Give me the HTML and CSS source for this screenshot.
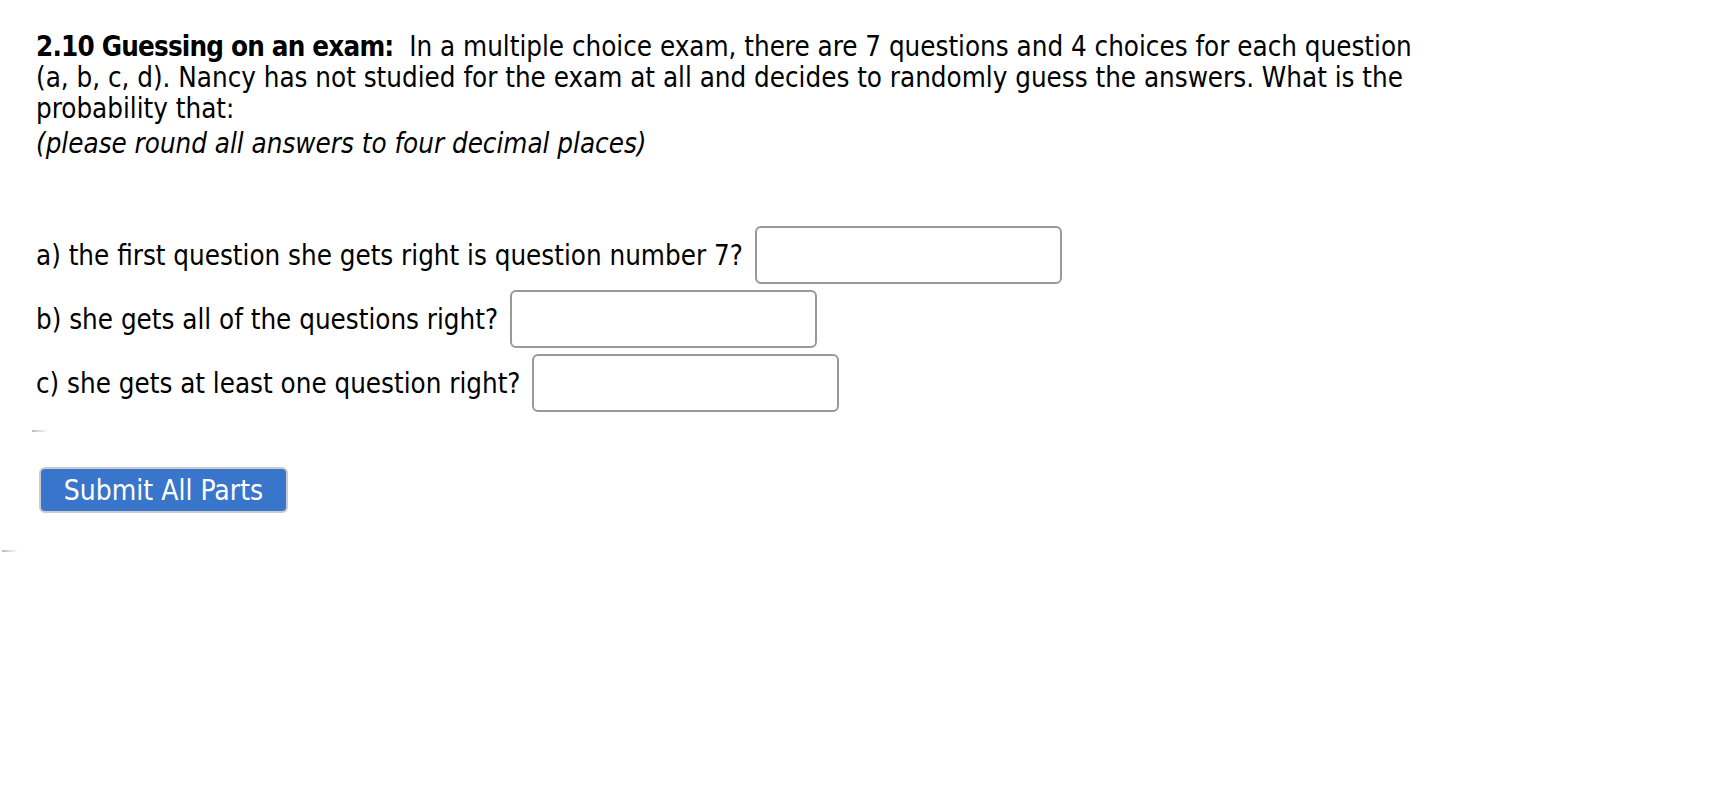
FILE: index.html
```html
<!DOCTYPE html>
<html lang="en">

<head>
    <meta charset="UTF-8">
    <title>2.10 Guessing on an exam</title>
    <link rel="stylesheet" href="styles.css">
</head>

<body>
    <div class="question">
        <p class="prompt">
            <b>2.10 Guessing on an exam:</b>&nbsp; In a multiple choice exam, there are 7 questions and 4 choices for each question (a, b, c, d). Nancy has not studied for the exam at all and decides to randomly guess the answers. What is the probability that:
        </p>
        <p class="note"><i>(please round all answers to four decimal places)</i></p>

        <div class="parts">
            <div class="part">
                <label for="partA">a) the first question she gets right is question number 7?</label>
                <input type="text" id="partA">
            </div>
            <div class="part">
                <label for="partB">b) she gets all of the questions right?</label>
                <input type="text" id="partB">
            </div>
            <div class="part">
                <label for="partC">c) she gets at least one question right?</label>
                <input type="text" id="partC">
            </div>
        </div>

        <div class="rule first"></div>

        <button type="button" class="submit">Submit All Parts</button>

        <div class="rule second"></div>
    </div>
</body>

</html>
```

FILE: styles.css
```css
body {
    margin: 0;
    padding: 0;
    background-color: #ffffff;
    color: #000000;
    font-family: "DejaVu Sans Condensed", "DejaVu Sans", sans-serif;
    font-stretch: condensed;
    font-size: 27.5px;
}

.question {
    padding: 31px 0 0 36px;
}

.prompt, .note {
    margin: 0;
    width: 1405px;
    line-height: 31px;
}

.prompt b {
    letter-spacing: -0.8px;
}

.note {
    margin-top: 4px;
}

.parts {
    margin-top: 67px;
    display: flex;
    flex-direction: column;
    gap: 6px;
}

.part {
    display: flex;
    align-items: center;
}

.part label {
    margin-right: 12px;
}

.part input {
    width: 307px;
    height: 58px;
    box-sizing: border-box;
    border: 2px solid #999999;
    border-radius: 6px;
    font-size: 24px;
    padding: 0 10px;
}

/* faint leftover separators */
.rule {
    height: 2px;
    width: 16px;
    background: linear-gradient(to right, #bbbbbb, rgba(255, 255, 255, 0));
}

.rule.first {
    margin: 18px 0 0 -4px;
}

.rule.second {
    margin: 37px 0 0 -34px;
}

.submit {
    display: block;
    margin: 35px 0 0 3px;
    width: 249px;
    height: 46px;
    background-color: #3875cb;
    color: white;
    border: 2px solid #cccccc;
    border-radius: 6px;
    font-family: inherit;
    font-size: 28px;
    padding: 0;
    cursor: pointer;
}
```
